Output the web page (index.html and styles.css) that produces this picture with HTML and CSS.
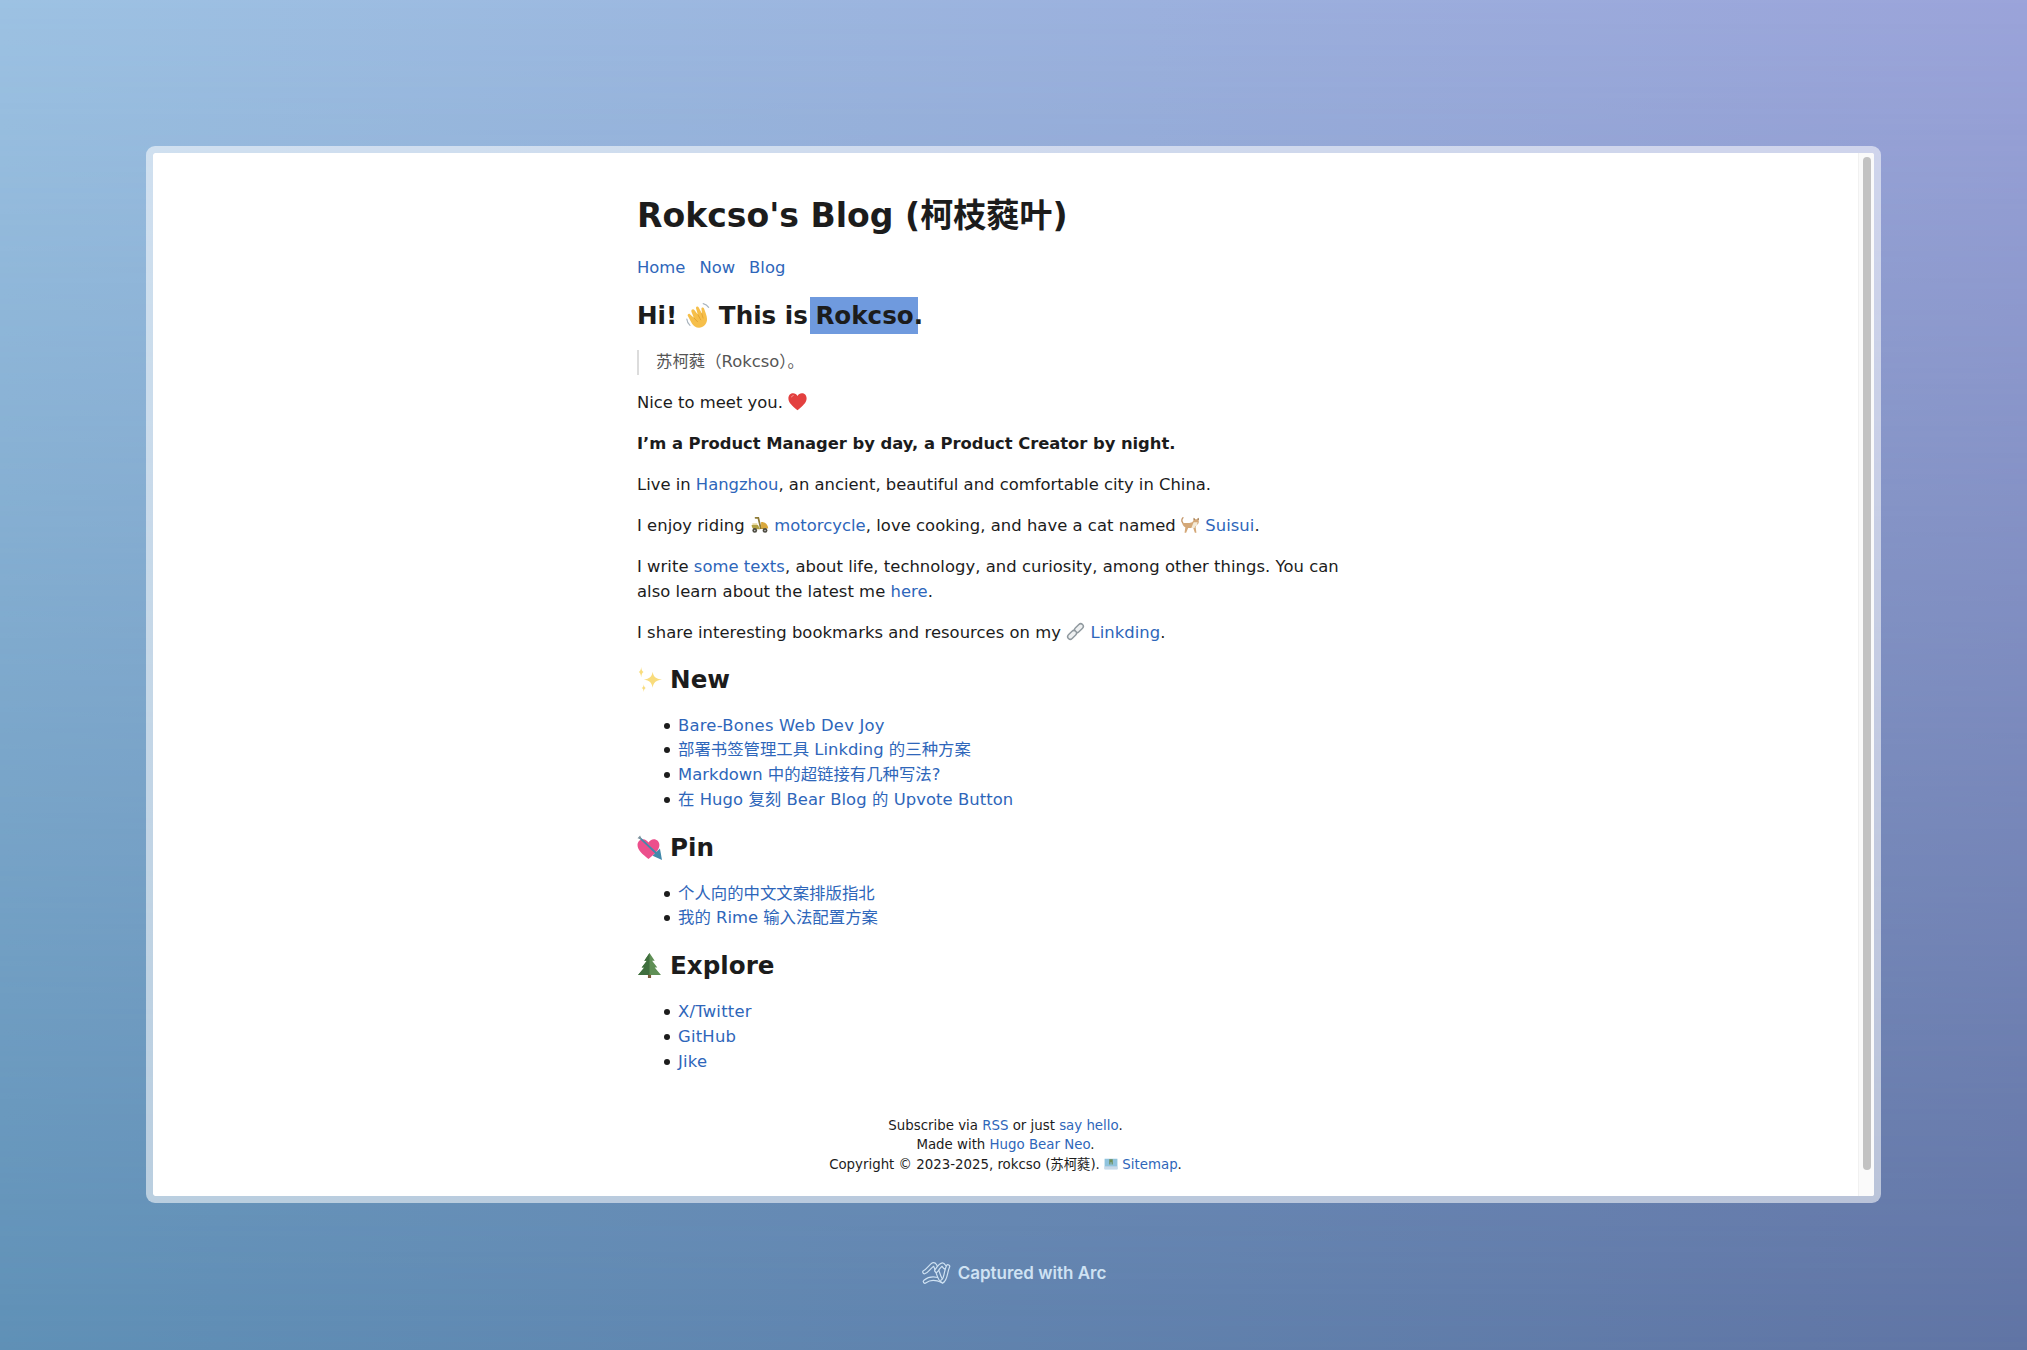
FILE: index.html
```html
<!DOCTYPE html>
<html lang="en">
<head>
<meta charset="utf-8">
<title>Rokcso's Blog</title>
<link rel="stylesheet" href="styles.css">
</head>
<body>
<div class="stage">
  <div class="window">
    <div class="page">
      <main class="column">
        <h1 class="site-title">Rokcso's Blog (柯枝蕤叶)</h1>
        <nav class="nav"><a href="#">Home</a><a href="#">Now</a><a href="#">Blog</a></nav>
        <h2 class="heading">Hi! <svg class="emoji-h" viewBox="0 0 24 24"><g fill="none" stroke="#a9b4bd" stroke-width="1.1" stroke-linecap="round"><path d="M.8 15.500c.3 2.500 1.200 4.500 3 6"/><path d="M16.500.6c2 .4 4 1.600 5.200 3.600"/></g><path fill="#f6bf4a" d="M5.500 6.500c.7-.8 2-.7 2.600.2l3.200 4.300-1.700-6c-.3-1.400 1.700-2.200 2.500-.9l3.300 6.300-.6-4.700c-.1-1.500 2-1.900 2.500-.5 1 3 2.900 7.100 2.900 10.300 0 4.500-3.500 8.200-7.700 8.200-3.200 0-5.200-1.800-6.700-3.800L1.800 12.500c-.9-1.300.9-2.800 2-1.800l3.700 3.500-2.300-5.700c-.2-.7-.1-1.300.3-2z"/><path fill="none" stroke="#dc9a2c" stroke-width=".7" d="M7.500 14.200l3.800 4M11.300 11l3 5.500M15 9.800l1.500 5"/></svg> This is <mark class="hl">Rokcso</mark>.</h2>
        <blockquote class="quote">苏柯蕤（Rokcso）。</blockquote>
        <p>Nice to meet you. <svg class="emoji" viewBox="0 0 24 24"><path fill="#e3403f" d="M12 23C5.500 17.500.5 13.500.5 7.800.5 4 3.300 1.500 6.500 1.500c2.400 0 4.300 1.300 5.500 3.400 1.200-2.100 3.100-3.400 5.500-3.400 3.200 0 6 2.500 6 6.300 0 5.700-5 9.700-11.500 15.200z"/><path fill="#f49a96" d="M4 6c.6-1.500 2-2.200 3.300-2 .4.100.3.500 0 .6-1.200.3-1.900 1-2.400 2-.3.500-1.100 0-.9-.6z"/></svg></p>
        <p class="tight"><strong>I’m a Product Manager by day, a Product Creator by night.</strong></p>
        <p>Live in <a href="#">Hangzhou</a>, an ancient, beautiful and comfortable city in China.</p>
        <p class="slight">I enjoy riding <svg class="emoji" viewBox="0 0 24 24"><path fill="none" stroke="#8e7a35" stroke-width="2.200" stroke-linecap="round" d="M7 3.500h3.500l3 13h3.500"/><path fill="#b4a243" d="M2 12.500h8l3 5.500H7c-3 0-5-2-5-5.500z"/><path fill="#d9a83d" d="M14 9c4.500-.5 8.500 2.500 9 8h-9z"/><path fill="#e8d9a0" d="M3 10.500h6l.5 2H3z"/><circle cx="6" cy="19.500" r="3" fill="#4c4a40"/><circle cx="19" cy="19.500" r="3" fill="#4c4a40"/><circle cx="6" cy="19.500" r="1" fill="#ccc"/><circle cx="19" cy="19.500" r="1" fill="#ccc"/></svg> <a href="#">motorcycle</a>, love cooking, and have a cat named <svg class="emoji" viewBox="0 0 24 24"><path fill="#d4a878" d="M1.500 9c2.500 1.500 8 1.500 12.500 0l1.500-1.500.7-4 2 2h1.600l2-2 .7 5c0 2-1 3.500-3 4l-1 3 1 7h-2l-2-6H9l-2.500 6h-2l1-7C3 14 1.500 12 1.500 9z"/><path fill="#f3ead8" d="M16 9h5l-1 4-2 1.500-1 2H13z"/><path fill="#8a6a45" d="M16 3.500l1.600 2-1.500 1.200zM22.500 3.500l-1.600 2 1.500 1.200z"/><path fill="none" stroke="#c49668" stroke-width="1.700" stroke-linecap="round" d="M2 9.500C.5 8 .8 5 2.500 3.500"/></svg> <a href="#">Suisui</a>.</p>
        <p class="slight">I write <a href="#">some texts</a>, about life, technology, and curiosity, among other things. You can also learn about the latest me <a href="#">here</a>.</p>
        <p class="slight">I share interesting bookmarks and resources on my <svg class="emoji" viewBox="0 0 24 24"><g fill="#eef0f1" stroke="#8f989e" stroke-width="1.800"><rect x="-6.500" y="-3.300" width="13" height="6.600" rx="3.300" transform="translate(16.300 7.700) rotate(-45)"/><rect x="-6.500" y="-3.300" width="13" height="6.600" rx="3.300" transform="translate(7.700 16.300) rotate(-45)"/></g></svg> <a href="#">Linkding</a>.</p>

        <h2 class="heading"><svg class="emoji-h" viewBox="0 0 24 24"><g fill="#f9dc7c"><path d="M15 4.500c.8 4.800 2.800 6.800 9 7.500-6.200 1-8.200 3-9 8-.8-5-2.800-7-8.500-8 5.700-.7 7.700-2.700 8.500-7.500z"/><path d="M4 0c.3 3 .8 4 2.300 4.800C4.800 5.700 4.300 7 4 10c-.3-3-.8-4.300-2.300-5.200C3.200 4 3.700 3 4 0z"/><path d="M6.500 16.500c.2 2.200.7 3 2 3.700-1.300.7-1.800 1.500-2 3.800-.2-2.300-.7-3.100-2-3.800 1.300-.7 1.800-1.500 2-3.700z"/></g></svg> New</h2>
        <ul class="list">
          <li class="wide"><a href="#">Bare-Bones Web Dev Joy</a></li>
          <li><a href="#">部署书签管理工具 Linkding 的三种方案</a></li>
          <li><a href="#">Markdown 中的超链接有几种写法?</a></li>
          <li class="hair"><a href="#">在 Hugo 复刻 Bear Blog 的 Upvote Button</a></li>
        </ul>

        <h2 class="heading"><svg class="emoji-h" viewBox="0 0 24 24"><path fill="#ec4f8c" d="M11 23C5.500 18.500.5 14.500.5 9.500c0-3.300 2.500-5.500 5.300-5.500 2.200 0 4 1.200 5.200 3.200C12.200 5.200 14 4 16.200 4c2.800 0 5.300 2.200 5.300 5.500 0 5-5 9-10.500 13.500z"/><path stroke="#4289ab" stroke-width="1.800" d="M2.500 2.500l17 16"/><path fill="#4289ab" d="M15 20l7-7 2 11z"/><path fill="#7e929d" d="M.5 3L3 .5l1.500 3.800z"/></svg> Pin</h2>
        <ul class="list">
          <li><a href="#">个人向的中文文案排版指北</a></li>
          <li><a href="#">我的 Rime 输入法配置方案</a></li>
        </ul>

        <h2 class="heading"><svg class="emoji-h" viewBox="0 0 24 24"><path fill="#5f8f55" d="M12 0l5 7.500h-2.500l5 6.500H17l6 7H1l6-7H4.500l5-6.500H7z"/><path fill="#3f6e3e" d="M12 0v21H1l6-7H4.500l5-6.500H7z"/><rect x="10.500" y="21" width="3" height="3" fill="#7a5a3a"/></svg> Explore</h2>
        <ul class="list">
          <li class="wide"><a href="#">X/Twitter</a></li>
          <li class="wide"><a href="#">GitHub</a></li>
          <li class="wide"><a href="#">Jike</a></li>
        </ul>

        <footer class="footer">
          <div>Subscribe via <a href="#">RSS</a> or just <a href="#">say hello</a>.</div>
          <div>Made with <a href="#">Hugo Bear Neo</a>.</div>
          <div>Copyright © 2023-2025, rokcso (苏柯蕤). <svg class="emoji" viewBox="0 0 24 24"><rect x="1" y="3" width="22" height="18" fill="#8fc3dd"/><path fill="#6f8f5a" d="M9 4h6v9h-2V9h-2v4H9z"/><path fill="#c9d9e8" d="M1 16h22v5H1z"/></svg> <a href="#">Sitemap</a>.</div>
        </footer>
      </main>
    </div>
    <div class="scrollbar"><div class="thumb"></div></div>
  </div>
  <div class="credit">
    <svg class="arc-logo" viewBox="0 0 30 24" fill="none" stroke-linecap="round" stroke-linejoin="round">
      <path class="rib-o" d="M4 20.500C9 16.500 15 17 21.500 20"/><path class="rib-i" d="M4 20.500C9 16.500 15 17 21.500 20"/>
      <path class="rib-o" d="M3.500 11C7 9.500 9 5.500 12 3.500c2.500-1 3 4 5 8.500 1 3 2 7 4.500 8"/><path class="rib-i" d="M3.500 11C7 9.500 9 5.500 12 3.500c2.500-1 3 4 5 8.500 1 3 2 7 4.500 8"/>
      <path class="rib-o" d="M15.500 9.500C17.500 6.500 19.500 3.500 21.500 3.500c1.500 0 1 3 3.500 3"/><path class="rib-i" d="M15.500 9.500C17.500 6.500 19.500 3.500 21.500 3.500c1.500 0 1 3 3.500 3"/>
      <path class="rib-o" d="M21.500 20c3.500-1.500 3-9.500 5.500-14.500"/><path class="rib-i" d="M21.500 20c3.500-1.500 3-9.500 5.500-14.500"/>
    </svg>
    <span>Captured with Arc</span>
  </div>
</div>
</body>
</html>
```
FILE: styles.css
```css
* { box-sizing: border-box; }
html, body { margin: 0; height: 100%; }
body {
  font-family: "DejaVu Sans", Verdana, "Noto Sans CJK SC", sans-serif;
  color: #1c1c1c;
  overflow: hidden;
}
.stage {
  position: relative;
  height: 1350px;
  padding: 146px 146px 0;
  display: flex;
  flex-direction: column;
  background: linear-gradient(to right, #9dc2e3, #9ba4da);
}
.stage::before {
  content: "";
  position: absolute;
  inset: 0;
  background: linear-gradient(to right, #5f90b6, #6074a4);
  -webkit-mask-image: linear-gradient(to bottom, transparent, #000);
  mask-image: linear-gradient(to bottom, transparent, #000);
}
.window {
  position: relative;
  height: 1057px;
  display: flex;
  border: 7px solid rgba(255,255,255,.55);
  border-radius: 9px;
  background: #fff;
  background-clip: padding-box;
  overflow: hidden;
}
.page { flex: 1; min-width: 0; padding-top: 39px; }
.column { width: 737px; margin: 0 auto; font-size: 16.4px; line-height: 24.5px; }
.scrollbar { width: 16px; padding: 4px 4px 0; background: #fafafa; border-left: 1px solid #f1f1f1; }
.thumb { height: 1013px; width: 8px; border-radius: 4px; background: #c2c2c2; }
.site-title { margin: 0 0 16px; font-size: 33.1px; line-height: 48px; font-weight: 700; }
.nav { display: flex; gap: 14px; margin-bottom: 17.5px; }
a { color: #2e66ba; text-decoration: none; }
.heading { margin: 0 0 16px; font-size: 24.6px; line-height: 36px; font-weight: 700; }
p { margin: 0 0 16.5px; max-width: 720px; }
.wide { letter-spacing: .23px; }
.slight { letter-spacing: .04px; }
.hair { letter-spacing: .06px; }
.tight { letter-spacing: -.05px; }
.quote { margin: 0 0 16.5px; padding-left: 17px; border-left: 2px solid #dcdcdc; color: #555; }
.hl { background: #6f9ade; color: inherit; padding: 4px 4px 4px 5px; margin: 0 -4px 0 -6px; }
.list { margin: 0 0 17px; padding-left: 41px; list-style: none; line-height: 24.8px; }
.list li::before {
  content: "";
  display: inline-block;
  width: 6px;
  height: 6px;
  margin: 0 8px 2px -14px;
  border-radius: 50%;
  background: #1c1c1c;
}
.emoji { width: 19px; height: 19px; vertical-align: -3px; }
.footer .emoji { width: 14px; height: 14px; vertical-align: -2px; }
.emoji-h { width: 25px; height: 25px; vertical-align: -4px; margin-right: -.5px; }
.footer { margin-top: 41px; text-align: center; font-size: 13.35px; line-height: 19.7px; }
.credit {
  position: relative;
  margin-top: 55px;
  display: flex; align-items: center; justify-content: center; gap: 7px;
  color: #cfe2f3;
  font-family: Inter, sans-serif; font-size: 17px; font-weight: 600; height: 30px;
}
.arc-logo { width: 30px; height: 24px; }
.rib-o { stroke: #cfe2f3; stroke-width: 4.6; }
.rib-i { stroke: #6285ad; stroke-width: 2.2; }
```
